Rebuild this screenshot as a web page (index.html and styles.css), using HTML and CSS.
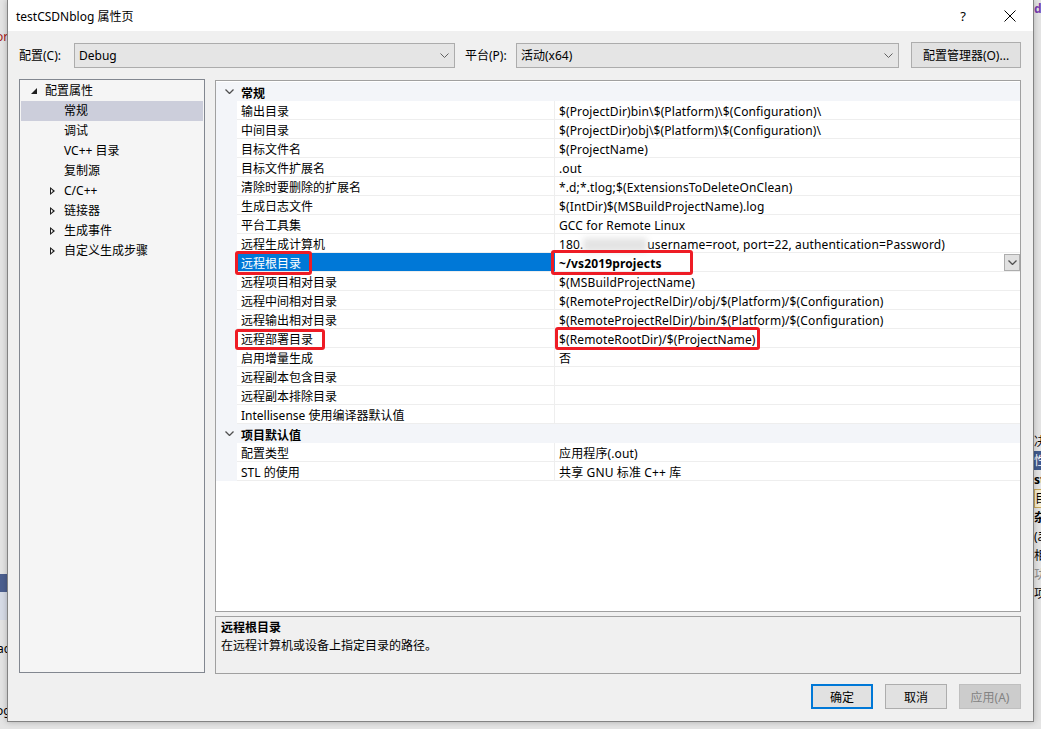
FILE: index.html
```html
<!DOCTYPE html>
<html lang="zh-CN">
<head>
    <meta charset="UTF-8">
    <title>testCSDNblog 属性页</title>
    <link rel="stylesheet" href="styles.css">
</head>
<body>
    <div class="desk">
        <!-- bits of the IDE behind the dialog -->
        <span class="bg-bit bg-or">or</span>
        <span class="bg-bit bg-purple">d-</span>
        <div class="bg-bit bg-band-left"></div>
        <div class="bg-bit bg-band-left2"></div>
        <span class="bg-bit bg-ac">ac</span>
        <span class="bg-bit bg-og">og</span>
        <div class="bg-bit bg-right">
            <span>决</span>
            <span class="bg-blue">性</span>
            <b>st</b>
            <span class="bg-box">目</span>
            <b>杂</b>
            <span>(ā</span>
            <span>相</span>
            <span class="dim">功</span>
            <span>项</span>
        </div>

        <div class="window">
            <div class="titlebar">
                <span class="title">testCSDNblog 属性页</span>
                <span class="help">?</span>
                <svg class="close" width="12" height="12" viewBox="0 0 12 12">
                    <path d="M0.5 0.5 L11.5 11.5 M11.5 0.5 L0.5 11.5" stroke="#000" stroke-width="1" fill="none"/>
                </svg>
            </div>

            <div class="content">
                <div class="config-row">
                    <label class="lbl">配置(C):</label>
                    <div class="combo combo-config">
                        <span>Debug</span>
                        <svg class="chev" width="9" height="5" viewBox="0 0 9 5"><path d="M0.5 0.5 L4.5 4.5 L8.5 0.5" stroke="#606060" fill="none"/></svg>
                    </div>
                    <label class="lbl lbl-platform">平台(P):</label>
                    <div class="combo combo-platform">
                        <span>活动(x64)</span>
                        <svg class="chev" width="9" height="5" viewBox="0 0 9 5"><path d="M0.5 0.5 L4.5 4.5 L8.5 0.5" stroke="#606060" fill="none"/></svg>
                    </div>
                    <button class="btn btn-manager">配置管理器(O)...</button>
                </div>

                <div class="main">
                    <div class="tree">
                        <div class="node root"><span class="tri-open"></span>配置属性</div>
                        <div class="node leaf current">常规</div>
                        <div class="node leaf">调试</div>
                        <div class="node leaf">VC++ 目录</div>
                        <div class="node leaf">复制源</div>
                        <div class="node branch"><span class="tri-closed"></span>C/C++</div>
                        <div class="node branch"><span class="tri-closed"></span>链接器</div>
                        <div class="node branch"><span class="tri-closed"></span>生成事件</div>
                        <div class="node branch"><span class="tri-closed"></span>自定义生成步骤</div>
                    </div>

                    <div class="right">
                        <div class="grid" id="grid"></div>
                        <div class="desc">
                            <div class="desc-title">远程根目录</div>
                            <div>在远程计算机或设备上指定目录的路径。</div>
                        </div>
                    </div>
                </div>

                <div class="buttons">
                    <button class="btn btn-ok">确定</button>
                    <button class="btn">取消</button>
                    <button class="btn btn-off">应用(A)</button>
                </div>
            </div>
        </div>
    </div>

    <script>
        const groups = [
            { name: "常规", items: [
                ["输出目录", "$(ProjectDir)bin\\$(Platform)\\$(Configuration)\\"],
                ["中间目录", "$(ProjectDir)obj\\$(Platform)\\$(Configuration)\\"],
                ["目标文件名", "$(ProjectName)"],
                ["目标文件扩展名", ".out"],
                ["清除时要删除的扩展名", "*.d;*.tlog;$(ExtensionsToDeleteOnClean)"],
                ["生成日志文件", "$(IntDir)$(MSBuildProjectName).log"],
                ["平台工具集", "GCC for Remote Linux"],
                ["远程生成计算机", "HOST"],
                ["远程根目录", "~/vs2019projects", "selected"],
                ["远程项目相对目录", "$(MSBuildProjectName)"],
                ["远程中间相对目录", "$(RemoteProjectRelDir)/obj/$(Platform)/$(Configuration)"],
                ["远程输出相对目录", "$(RemoteProjectRelDir)/bin/$(Platform)/$(Configuration)"],
                ["远程部署目录", "$(RemoteRootDir)/$(ProjectName)"],
                ["启用增量生成", "否"],
                ["远程副本包含目录", ""],
                ["远程副本排除目录", ""],
                ["Intellisense 使用编译器默认值", ""]
            ]},
            { name: "项目默认值", items: [
                ["配置类型", "应用程序(.out)"],
                ["STL 的使用", "共享 GNU 标准 C++ 库"]
            ]}
        ];

        const chevron = '<svg width="9" height="5" viewBox="0 0 9 5"><path d="M0.5 0.5 L4.5 4.5 L8.5 0.5" stroke="#505050" stroke-width="1.3" fill="none"/></svg>';
        let html = "";

        groups.forEach(g => {
            html += `<div class="cat"><span class="cat-icon">${chevron}</span><span class="cat-name">${g.name}</span></div>`;
            g.items.forEach(item => {
                let [name, value, state] = item;
                let valueHtml = value;
                if (value === "HOST") {
                    valueHtml = '180.<span class="smudge"></span>username=root, port=22, authentication=Password)';
                }
                if (state === "selected") {
                    valueHtml = `<b>${value}</b><span class="drop">${chevron}</span>`;
                }
                html += `<div class="prop ${state || ""}"><span class="gutter"></span><span class="pname">${name}</span><span class="pvalue">${valueHtml}</span></div>`;
            });
        });

        // hand-drawn red annotation boxes
        html += '<div class="mark" style="left:19px;top:170px;width:77px;height:24px"></div>';
        html += '<div class="mark" style="left:335px;top:169px;width:142px;height:25px"></div>';
        html += '<div class="mark" style="left:19px;top:248px;width:90px;height:21px"></div>';
        html += '<div class="mark" style="left:339px;top:246px;width:205px;height:23px"></div>';

        document.getElementById("grid").innerHTML = html;
    </script>
</body>
</html>
```

FILE: styles.css
```css
* {
    margin: 0;
    padding: 0;
    box-sizing: border-box;
}

body {
    width: 1041px;
    height: 729px;
    overflow: hidden;
    background: #e4e4e4;
    font-family: "Noto Sans", "Noto Sans CJK SC", sans-serif;
    font-size: 12px;
    color: #000;
}

.desk {
    position: relative;
    width: 1041px;
    height: 729px;
}

/* background window fragments */
.bg-bit {
    position: absolute;
    font-size: 12px;
}

.bg-or {
    left: -4px;
    top: 28px;
    color: #a31515;
}

.bg-purple {
    left: 1034px;
    top: 0px;
    color: #7a3fb0;
    font-weight: bold;
}

.bg-band-left {
    left: 0;
    top: 574px;
    width: 8px;
    height: 18px;
    background: #4c5f8f;
}

.bg-band-left2 {
    left: 0;
    top: 592px;
    width: 8px;
    height: 28px;
    background: #d6dbe6;
}

.bg-ac {
    left: -3px;
    top: 640px;
}

.bg-og {
    left: -4px;
    top: 702px;
}

.bg-right {
    left: 1034px;
    top: 432px;
    width: 12px;
    display: flex;
    flex-direction: column;
    line-height: 19px;
    font-size: 12px;
}

.bg-right .bg-blue {
    background: #3f5a8c;
    color: #fff;
}

.bg-right .bg-box {
    border: 1px solid #c8a85a;
    background: #f5ecd0;
    line-height: 17px;
}

.bg-right .dim {
    color: #888;
}

/* dialog */
.window {
    position: absolute;
    left: 7px;
    top: 0;
    width: 1027px;
    height: 722px;
    background: #f0f0f0;
    border: 1px solid #838383;
    border-top: none;
    box-shadow: 0 0 6px rgba(0, 0, 0, 0.25);
    display: flex;
    flex-direction: column;
}

.titlebar {
    height: 31px;
    background: #fff;
    display: flex;
    align-items: center;
    padding-left: 8px;
}

.title {
    flex: 1;
    font-size: 12px;
}

.help {
    font-size: 13px;
    margin-right: 38px;
}

.close {
    margin-right: 17px;
}

.content {
    flex: 1;
    padding: 11px 12px 0 11px;
    display: flex;
    flex-direction: column;
}

.config-row {
    display: flex;
    align-items: center;
    height: 26px;
}

.lbl {
    width: 55px;
}

.lbl-platform {
    width: 51px;
    margin-left: 10px;
}

.combo {
    height: 25px;
    background: #e5e5e5;
    border: 1px solid #acacac;
    display: flex;
    align-items: center;
    justify-content: space-between;
    padding: 0 5px 0 4px;
}

.combo-config {
    width: 381px;
}

.combo-platform {
    width: 383px;
}

.btn {
    font-family: "Noto Sans", "Noto Sans CJK SC", sans-serif;
    font-size: 12px;
    background: #e1e1e1;
    border: 1px solid #adadad;
    color: #000;
    height: 25px;
    width: 62px;
}

.btn-manager {
    width: 110px;
    height: 26px;
    margin-left: 12px;
}

.main {
    display: flex;
    margin-top: 11px;
    gap: 10px;
}

/* left tree */
.tree {
    width: 186px;
    height: 594px;
    background: #f5f5f5;
    border: 1px solid #828790;
    padding: 1px 1px 0 1px;
}

.node {
    height: 20px;
    line-height: 20px;
    position: relative;
}

.root {
    padding-left: 24px;
}

.leaf {
    padding-left: 43px;
}

.branch {
    padding-left: 43px;
}

.current {
    background: #cccedb;
}

.tri-open {
    position: absolute;
    left: 10px;
    top: 7px;
    width: 0;
    height: 0;
    border-left: 6px solid transparent;
    border-bottom: 6px solid #1e1e1e;
}

.tri-closed {
    position: absolute;
    left: 29px;
    top: 6px;
    width: 0;
    height: 0;
    border-top: 4px solid transparent;
    border-bottom: 4px solid transparent;
    border-left: 5px solid #1e1e1e;
}

.tri-closed::after {
    content: "";
    position: absolute;
    left: -4px;
    top: -2px;
    border-top: 2px solid transparent;
    border-bottom: 2px solid transparent;
    border-left: 2px solid #f5f5f5;
}

/* property grid */
.right {
    width: 806px;
    display: flex;
    flex-direction: column;
    gap: 4px;
    padding-top: 1px;
}

.grid {
    position: relative;
    height: 532px;
    background: #fff;
    border: 1px solid #a0a0a0;
    padding-top: 1px;
}

.cat {
    height: 19px;
    display: flex;
    align-items: center;
    background: #f3f5f9;
    font-weight: bold;
}

.cat-icon {
    width: 25px;
    display: flex;
    justify-content: center;
    padding-left: 2px;
}

.cat-name {
    padding-top: 2px;
}

.prop {
    height: 19px;
    display: flex;
}

.gutter {
    width: 21px;
    background: #f3f5f9;
}

.pname {
    width: 318px;
    padding: 3px 0 0 4px;
    line-height: 15px;
    border-bottom: 1px solid #eeeeee;
    border-right: 1px solid #eeeeee;
    white-space: nowrap;
}

.pvalue {
    flex: 1;
    padding: 3px 0 0 4px;
    line-height: 15px;
    letter-spacing: 0.13px;
    border-bottom: 1px solid #eeeeee;
    white-space: nowrap;
    display: flex;
    align-items: center;
    position: relative;
}

.prop.selected .pname {
    background: #0078d7;
    color: #fff;
    border-right-color: #0078d7;
}

.smudge {
    display: inline-block;
    width: 64px;
    height: 14px;
    background: #e4e4e4;
    filter: blur(3px);
}

.drop {
    position: absolute;
    right: 0;
    top: 1px;
    width: 16px;
    height: 17px;
    background: #e1e1e1;
    border: 1px solid #adadad;
    display: flex;
    align-items: center;
    justify-content: center;
}

.mark {
    position: absolute;
    border: 3px solid #ee1c25;
    border-radius: 3px;
}

/* description pane */
.desc {
    height: 58px;
    border: 1px solid #a0a0a0;
    padding: 2px 5px;
    line-height: 18px;
}

.desc-title {
    font-weight: bold;
}

/* bottom buttons */
.buttons {
    display: flex;
    justify-content: flex-end;
    gap: 12px;
    margin-top: 10px;
}

.btn-ok {
    border: 2px solid #0078d7;
}

.btn-off {
    background: #cccccc;
    border-color: #bfbfbf;
    color: #838383;
}
```
